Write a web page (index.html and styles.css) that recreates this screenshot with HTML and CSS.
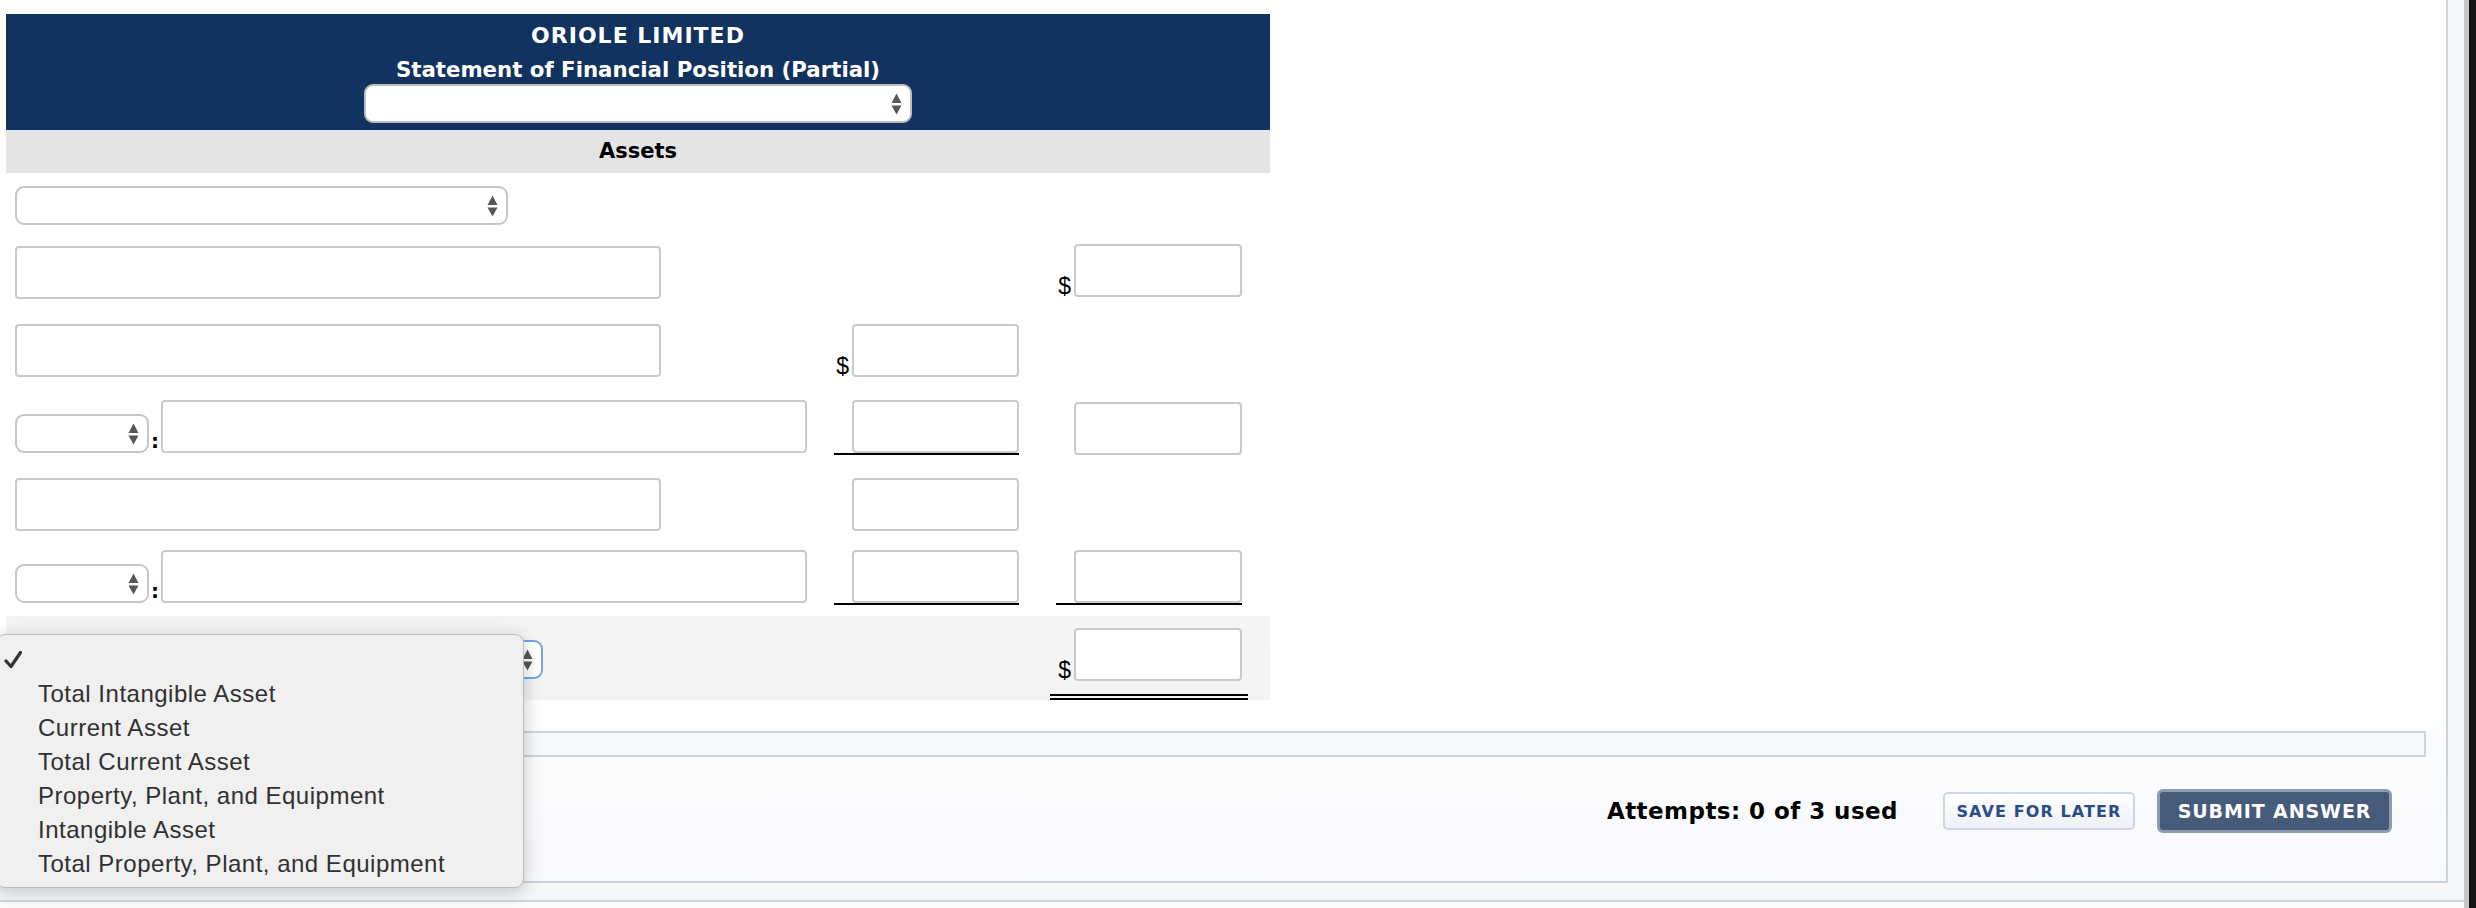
FILE: index.html
```html
<!DOCTYPE html>
<html>
<head>
<meta charset="utf-8">
<title>Oriole Limited</title>
<link rel="stylesheet" href="styles.css">
</head>
<body>
<div class="screen">
  <div class="main">
    <div class="panel">
      <div class="sheet">
        <div class="hdr">
          <div class="t1">ORIOLE LIMITED</div>
          <div class="t2">Statement of Financial Position (Partial)</div>
          <div class="sel sel-hdr"><svg viewBox="0 0 11 22"><polygon points="0.5,10 5.5,0.5 10.5,10"/><polygon points="0.5,12.5 10.5,12.5 5.5,21.5"/></svg></div>
        </div>
        <div class="sec">Assets</div>

        <div class="row r1">
          <div class="c1"><div class="sel sel-lg"><svg viewBox="0 0 11 22"><polygon points="0.5,10 5.5,0.5 10.5,10"/><polygon points="0.5,12.5 10.5,12.5 5.5,21.5"/></svg></div></div>
          <div class="c2"></div>
          <div class="c3"></div>
        </div>

        <div class="row r2">
          <div class="c1"><input class="inp w-lbl" type="text"></div>
          <div class="c2"></div>
          <div class="c3"><div class="fld up2"><span class="cur">$</span><input class="inp w-tot" type="text"></div></div>
        </div>

        <div class="row r3">
          <div class="c1"><input class="inp w-lbl" type="text"></div>
          <div class="c2"><div class="fld"><span class="cur">$</span><input class="inp w-amt" type="text"></div></div>
          <div class="c3"></div>
        </div>

        <div class="row r4">
          <div class="c1"><div class="sel sel-sm"><svg viewBox="0 0 11 22"><polygon points="0.5,10 5.5,0.5 10.5,10"/><polygon points="0.5,12.5 10.5,12.5 5.5,21.5"/></svg></div><span class="colon">:</span><input class="inp w-lbl" type="text"></div>
          <div class="c2"><div class="fld ul"><input class="inp w-amt" type="text"></div></div>
          <div class="c3"><div class="fld dn2"><input class="inp w-tot" type="text"></div></div>
        </div>

        <div class="row r5">
          <div class="c1"><input class="inp w-lbl" type="text"></div>
          <div class="c2"><div class="fld"><input class="inp w-amt" type="text"></div></div>
          <div class="c3"></div>
        </div>

        <div class="row r6">
          <div class="c1"><div class="sel sel-sm"><svg viewBox="0 0 11 22"><polygon points="0.5,10 5.5,0.5 10.5,10"/><polygon points="0.5,12.5 10.5,12.5 5.5,21.5"/></svg></div><span class="colon">:</span><input class="inp w-lbl" type="text"></div>
          <div class="c2"><div class="fld ul"><input class="inp w-amt" type="text"></div></div>
          <div class="c3"><div class="fld ul"><input class="inp w-tot" type="text"></div></div>
        </div>

        <div class="row r7">
          <div class="c1 c1-top"><div class="sel sel-focus"><svg viewBox="0 0 11 22"><polygon points="0.5,10 5.5,0.5 10.5,10"/><polygon points="0.5,12.5 10.5,12.5 5.5,21.5"/></svg></div></div>
          <div class="c2"></div>
          <div class="c3"><div class="fld dbl"><span class="cur">$</span><input class="inp w-tot" type="text"></div></div>
        </div>
      </div>

      <div class="bar"></div>

      <div class="actions">
        <span class="attempts">Attempts: 0 of 3 used</span>
        <button class="btn btn-save" type="button">SAVE FOR LATER</button>
        <button class="btn btn-submit" type="button">SUBMIT ANSWER</button>
      </div>
    </div>
    <div class="foot"></div>
  </div>
  <div class="edge"><div class="edge-g"></div><div class="edge-k"></div></div>
</div>

<div class="popup">
  <div class="opt opt-chk"><svg class="tick" viewBox="0 0 18 18"><polyline points="2,10 7,15.5 16.5,1.5"/></svg></div>
  <div class="opt">Total Intangible Asset</div>
  <div class="opt">Current Asset</div>
  <div class="opt">Total Current Asset</div>
  <div class="opt">Property, Plant, and Equipment</div>
  <div class="opt">Intangible Asset</div>
  <div class="opt">Total Property, Plant, and Equipment</div>
</div>
</body>
</html>
```

FILE: styles.css
```css
html, body {
  margin: 0;
  padding: 0;
}
body {
  width: 2476px;
  height: 908px;
  overflow: hidden;
  position: relative;
  font-family: "DejaVu Sans", Verdana, sans-serif;
  background: #fff;
  color: #000;
}
.screen {
  display: flex;
  height: 908px;
}
.main {
  width: 2464px;
  display: flex;
  flex-direction: column;
  background: #f5f7f9;
}
.panel {
  box-sizing: border-box;
  width: 2448px;
  height: 883px;
  border-right: 2px solid #cbd3dc;
  border-bottom: 2px solid #cbd3dc;
  background: linear-gradient(#ffffff 72%, #f8f9fb);
  padding: 14px 0 0 6px;
}
.foot {
  margin-top: 17px;
  border-top: 2px solid #cdd4dc;
  flex: 1;
  background: #fbfbfc;
}
.edge {
  display: flex;
  width: 12px;
}
.edge-g {
  width: 5px;
  background: #c6c6c6;
}
.edge-k {
  flex: 1;
  background: #161616;
}

.sheet {
  width: 1264px;
}
.hdr {
  background: #12325f;
  color: #fff;
  text-align: center;
  font-weight: bold;
  font-size: 21px;
  padding: 5px 0 7px;
}
.t1, .t2 {
  line-height: 34px;
}
.t1 {
  font-size: 22px;
  letter-spacing: 1px;
}
.t2 {
  font-size: 21.3px;
}
.sel {
  box-sizing: border-box;
  height: 39px;
  border: 2px solid #c6c6c6;
  border-radius: 9px;
  background: #fff;
  display: flex;
  align-items: center;
  justify-content: flex-end;
  padding-right: 8px;
  flex: none;
}
.sel svg {
  width: 11px;
  height: 22px;
  display: block;
  fill: #575757;
}
.sel-hdr {
  width: 548px;
  margin: -3px auto 0;
  border-color: #bdbdbd;
}
.sel-lg {
  width: 493px;
}
.sel-sm {
  width: 134px;
}
.sel-focus {
  width: 528px;
  border-color: #74a6e4;
}
.sec {
  background: #e4e4e4;
  height: 43px;
  line-height: 43px;
  text-align: center;
  font-weight: bold;
  font-size: 21px;
}

.row {
  display: flex;
  align-items: flex-end;
  box-sizing: border-box;
  padding-bottom: 10px;
}
.r1 { height: 62px; }
.r2 { height: 74px; }
.r3 { height: 78px; }
.r4 { height: 76px; }
.r5 { height: 78px; }
.r6 { height: 75px; padding-bottom: 13px; }
.r7 { height: 84px; padding-bottom: 0; background: #f4f4f4; }

.c1 {
  box-sizing: border-box;
  width: 821px;
  padding-left: 9px;
  display: flex;
  align-items: flex-end;
}
.c1-top {
  align-self: flex-start;
  margin-top: 24px;
}
.c2 {
  box-sizing: border-box;
  width: 219px;
  padding: 0 27px 0 7px;
}
.c3 {
  box-sizing: border-box;
  width: 224px;
  padding: 0 28px 0 10px;
}
.fld {
  display: flex;
  justify-content: flex-end;
  align-items: flex-end;
}
.ul {
  border-bottom: 2px solid #000;
  margin-bottom: -2px;
}
.up2 { margin-bottom: 2px; }
.dn2 { margin-bottom: -2px; }
.dbl {
  border-bottom: 6px double #000;
  padding: 0 6px 13px;
  margin: 0 -6px;
}
.inp {
  box-sizing: border-box;
  height: 53px;
  border: 2px solid #cacaca;
  border-radius: 4px;
  background: #fff;
  padding: 0;
  margin: 0;
  display: block;
  outline: none;
  flex: none;
}
.w-lbl { width: 646px; }
.w-amt { width: 167px; }
.w-tot { width: 168px; }
.cur {
  font-family: "Liberation Sans", Arial, sans-serif;
  font-size: 23px;
  line-height: 22px;
  margin-right: 3px;
}
.colon {
  width: 12px;
  text-align: center;
  font-weight: bold;
  font-size: 20px;
  line-height: 20px;
  margin-bottom: 2px;
  flex: none;
}

.bar {
  box-sizing: border-box;
  height: 26px;
  margin: 31px 20px 0 0;
  border: 2px solid #ccd4de;
  background: #f6f8fa;
}
.actions {
  display: flex;
  justify-content: flex-end;
  align-items: center;
  height: 44px;
  margin-top: 32px;
  padding-right: 54px;
}
.attempts {
  font-weight: bold;
  font-size: 23px;
  letter-spacing: 0.45px;
  margin-right: 45px;
}
.btn {
  box-sizing: border-box;
  font-family: "DejaVu Sans", Verdana, sans-serif;
  font-weight: bold;
  padding: 0;
  cursor: pointer;
}
.btn-save {
  width: 192px;
  height: 38px;
  border: 2px solid #cdd6e2;
  border-radius: 5px;
  background: linear-gradient(#ffffff, #eef1f5);
  color: #2b4c85;
  font-size: 16px;
  letter-spacing: 1.1px;
  margin-right: 22px;
}
.btn-submit {
  width: 235px;
  height: 44px;
  border: 3px solid #8d9bb1;
  border-radius: 6px;
  background: #465a7a;
  color: #fff;
  font-size: 19px;
  letter-spacing: 0.9px;
}

.popup {
  position: absolute;
  left: -4px;
  top: 634px;
  box-sizing: border-box;
  width: 528px;
  height: 254px;
  background: #f0f0f0;
  border: 1px solid #bcbcbc;
  border-radius: 9px;
  box-shadow: 0 4px 18px rgba(0, 0, 0, 0.22);
  padding: 8px 0 7px 41px;
  font-family: "Liberation Sans", Arial, sans-serif;
  font-size: 24px;
  letter-spacing: 0.5px;
  color: #303030;
}
.opt {
  height: 34px;
  line-height: 34px;
  white-space: nowrap;
}
.opt-chk {
  display: flex;
  align-items: center;
}
.tick {
  display: block;
  width: 18px;
  height: 18px;
  margin-left: -34px;
  fill: none;
  stroke: #333;
  stroke-width: 3.2;
  stroke-linecap: round;
  stroke-linejoin: round;
}
```
